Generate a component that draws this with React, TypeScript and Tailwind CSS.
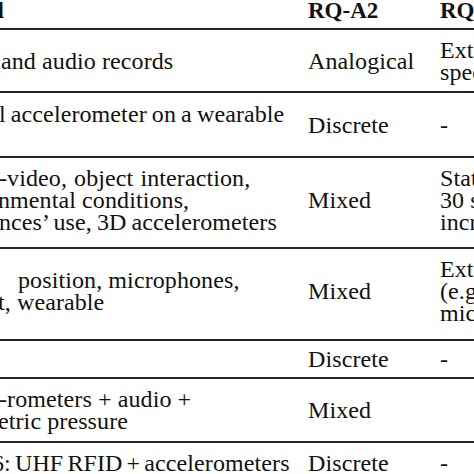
import React from 'react';

type Line = { t: string; cls?: string };
type Row = { h: string; c1: Line[]; c2: string; c3: string[] };

// visible slice of the table: first column is cut on the left, third on the right
const rows: Row[] = [
  {
    h: 'h-[61px]',
    c1: [{ t: 'and audio records', cls: 'ml-[1px]' }],
    c2: 'Analogical',
    c3: ['Extraction of', 'speech features'],
  },
  {
    h: 'h-[63px]',
    c1: [{ t: 'l accelerometer on a wearable', cls: '-ml-[1px] [word-spacing:-1px]' }, { t: '\u00a0' }],
    c2: 'Discrete',
    c3: ['-'],
  },
  {
    h: 'h-[83px] pb-[6px]',
    c1: [
      { t: '-video, object interaction,', cls: '-ml-[1px] [word-spacing:1px]' },
      { t: 'nmental conditions,', cls: '-ml-[2px]' },
      { t: 'nces\u2019 use, 3D accelerometers', cls: '-ml-[1px] [word-spacing:-1px]' },
    ],
    c2: 'Mixed',
    c3: ['Statistical features over', '30 s windows with', 'increments'],
  },
  {
    h: 'h-[84px] pb-[6px]',
    c1: [
      { t: 'position, microphones,', cls: 'ml-[18px]' },
      { t: 't, wearable', cls: '-ml-[2px]' },
    ],
    c2: 'Mixed',
    c3: ['Extracted features', '(e.g., from', 'microphones)'],
  },
  {
    h: 'h-[36px]',
    c1: [{ t: '\u00a0' }],
    c2: 'Discrete',
    c3: ['-'],
  },
  {
    h: 'h-[62px]',
    c1: [
      { t: '-rometers + audio +', cls: '-ml-[1px]' },
      { t: 'etric pressure', cls: '-ml-[2px]' },
    ],
    c2: 'Mixed',
    c3: ['\u00a0'],
  },
  {
    h: 'h-[40px]',
    c1: [{ t: '6: UHF RFID + accelerometers', cls: '-ml-[8px] [word-spacing:-2px]' }],
    c2: 'Discrete',
    c3: ['-'],
  },
];

export default function App() {
  return (
    <div
      className="w-[474px] h-[474px] overflow-hidden bg-white text-[#111111] text-[24px] leading-[22px] tracking-[0.1px]"
      style={{ fontFamily: '"Liberation Serif", "Times New Roman", serif' }}
    >
      <div className="w-[760px]">
        {/* header */}
        <div className="grid grid-cols-[308px_132px_1fr] h-[30px] border-b-2 border-[#262626] text-[23px] font-bold tracking-normal">
          <div className="whitespace-nowrap">
            <span className="inline-block -ml-[9px]">d</span>
          </div>
          <div className="whitespace-nowrap">RQ-A2</div>
          <div className="whitespace-nowrap">RQ-A3</div>
        </div>
        {rows.map((r, i) => (
          <div
            key={i}
            className={`grid grid-cols-[308px_132px_1fr] items-center ${r.h} box-content ${i < rows.length - 1 ? 'border-b-2 border-[#262626]' : ''}`}
          >
            <div className="flex flex-col">
              {r.c1.map((l, j) => (
                <div key={j} className={`whitespace-nowrap ${l.cls ?? ''}`}>
                  {l.t}
                </div>
              ))}
            </div>
            <div className="whitespace-nowrap">{r.c2}</div>
            <div className="flex flex-col">
              {r.c3.map((l, j) => (
                <div key={j} className="whitespace-nowrap">
                  {l}
                </div>
              ))}
            </div>
          </div>
        ))}
      </div>
    </div>
  );
}
